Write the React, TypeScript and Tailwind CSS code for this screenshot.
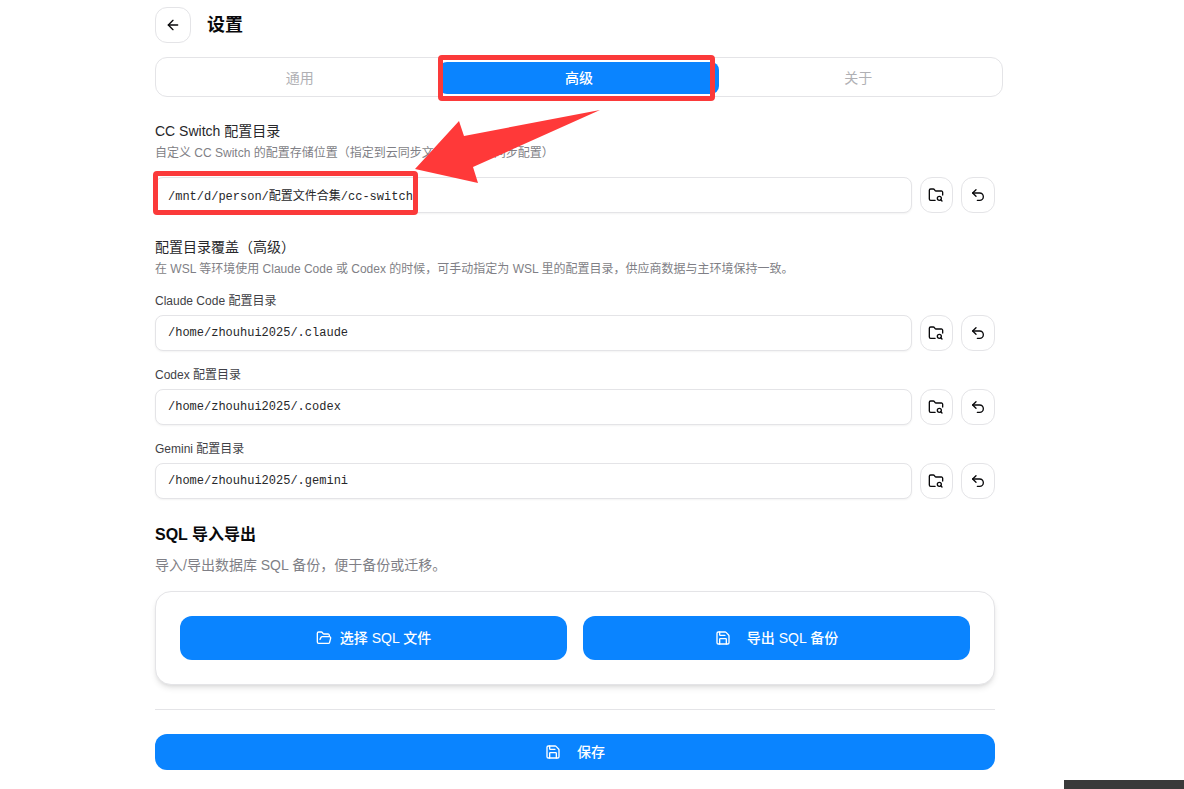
import { clsx } from 'clsx'
import { ArrowLeft, FolderOpen, FolderSearch, Save, Undo2 } from 'lucide-react'
import { useState } from 'react'

const TABS = [
  { id: 'general', label: '通用' },
  { id: 'advanced', label: '高级' },
  { id: 'about', label: '关于' },
]

const OVERRIDES = [
  { id: 'claude', label: 'Claude Code 配置目录', path: '/home/zhouhui2025/.claude' },
  { id: 'codex', label: 'Codex 配置目录', path: '/home/zhouhui2025/.codex' },
  { id: 'gemini', label: 'Gemini 配置目录', path: '/home/zhouhui2025/.gemini' },
]

const iconButton =
  'flex h-9 shrink-0 items-center justify-center rounded-xl border border-[#e4e4e7] bg-white text-[#09090b]'

const primaryButton =
  'flex w-full items-center justify-center gap-2 rounded-xl bg-[#0a84ff] text-sm font-medium text-white'

interface DirectoryFieldProps {
  id: string
  defaultPath: string
}

function DirectoryField({ id, defaultPath }: DirectoryFieldProps) {
  const [path, setPath] = useState(defaultPath)

  return (
    <div className="flex items-center gap-2">
      <input
        id={id}
        type="text"
        value={path}
        onChange={(e) => setPath(e.target.value)}
        className="h-9 min-w-0 flex-1 rounded-lg border border-[#e4e4e7] bg-white px-3 font-['Liberation_Mono','Noto_Sans_CJK_SC',monospace] text-xs text-[#27272a] shadow-xs outline-none"
      />
      <button type="button" aria-label="浏览" className={clsx(iconButton, 'w-[33px] pr-px')}>
        <FolderSearch className="size-4" />
      </button>
      <button
        type="button"
        aria-label="恢复默认"
        onClick={() => setPath(defaultPath)}
        className={clsx(iconButton, 'w-[34px]')}
      >
        <Undo2 className="size-4" />
      </button>
    </div>
  )
}

export default function App() {
  const [activeTab, setActiveTab] = useState('advanced')

  return (
    <div
      lang="zh-CN"
      className="min-h-screen bg-white pr-[26px] font-['Liberation_Sans','Noto_Sans_CJK_SC',sans-serif] text-[#09090b]"
    >
      <div className="mx-auto max-w-[848px] pt-[7px]">
        <header className="flex items-center gap-4">
          <button type="button" aria-label="返回" className={clsx(iconButton, 'w-9')}>
            <ArrowLeft className="size-4" />
          </button>
          <h1 className="text-lg font-semibold">设置</h1>
        </header>

        <div className="relative mt-3.5">
          <div
            role="tablist"
            className="grid h-10 grid-cols-3 items-center rounded-xl border border-[#e4e4e7] px-1 pt-0.5"
          >
            {TABS.map((tab) => (
              <button
                key={tab.id}
                type="button"
                role="tab"
                aria-selected={activeTab === tab.id}
                onClick={() => setActiveTab(tab.id)}
                className={clsx(
                  'h-8 rounded-lg text-sm',
                  activeTab === tab.id
                    ? 'bg-[#0a84ff] font-medium text-white'
                    : 'text-[#b0b0b4]'
                )}
              >
                {tab.label}
              </button>
            ))}
          </div>
          {/* Highlight around the active tab */}
          <div className="pointer-events-none absolute -top-0.5 left-[283px] h-[46px] w-[277px] rounded-sm border-5 border-[#fb3a3a]" />
        </div>

        <main className="pr-2 pb-5">
          <section className="relative mt-6">
            <label htmlFor="app-dir" className="block text-sm leading-5 text-[#27272a]">
              CC Switch 配置目录
            </label>
            <p className="mt-1 mb-4 text-xs text-[#7f7f86]">
              自定义 CC Switch 的配置存储位置（指定到云同步文件夹即可云同步配置）
            </p>
            <DirectoryField id="app-dir" defaultPath="/mnt/d/person/配置文件合集/cc-switch" />

            {/* Annotation: boxed path and the arrow pointing at it */}
            <div className="pointer-events-none absolute -left-0.5 top-[50px] h-11 w-[265px] rounded-sm border-5 border-[#fb3a3a]" />
            <svg
              viewBox="0 0 186 74"
              className="pointer-events-none absolute -top-3 left-[260px] h-[74px] w-[186px]"
              aria-hidden="true"
            >
              <path d="M0 60 44 12 49 27 185 1 58 58 63 74Z" fill="#ff3939" />
            </svg>
          </section>

          <section className="mt-6">
            <h2 className="text-sm leading-5 text-[#27272a]">配置目录覆盖（高级）</h2>
            <p className="mt-1 text-xs text-[#7f7f86]">
              在 WSL 等环境使用 Claude Code 或 Codex 的时候，可手动指定为 WSL
              里的配置目录，供应商数据与主环境保持一致。
            </p>
            <div className="mt-4 flex flex-col gap-4">
              {OVERRIDES.map((item) => (
                <div key={item.id} className="flex flex-col gap-1.5">
                  <label htmlFor={item.id} className="text-xs text-[#3f3f46]">
                    {item.label}
                  </label>
                  <DirectoryField id={item.id} defaultPath={item.path} />
                </div>
              ))}
            </div>
          </section>

          <section className="mt-6">
            <h2 className="text-base font-semibold">SQL 导入导出</h2>
            <p className="mt-2 text-sm text-[#7f7f86]">
              导入/导出数据库 SQL 备份，便于备份或迁移。
            </p>
            <div className="mt-4 grid grid-cols-2 gap-4 rounded-2xl border border-[#e4e4e7] bg-white p-6 shadow-md">
              <button type="button" className={clsx(primaryButton, 'h-11')}>
                <FolderOpen className="size-4" />
                选择 SQL 文件
              </button>
              <button type="button" className={clsx(primaryButton, 'h-11')}>
                <Save className="mr-2 size-4" />
                导出 SQL 备份
              </button>
            </div>
          </section>

          <footer className="mt-6 border-t border-[#e4e4e7] pt-6">
            <button type="button" className={clsx(primaryButton, 'h-9')}>
              <Save className="mr-2 size-4" />
              保存
            </button>
          </footer>
        </main>
      </div>

      {/* Edge of the dark panel behind the window */}
      <div className="fixed right-0 bottom-0 h-[9px] w-[120px] bg-[#3a3a3a]" />
    </div>
  )
}
